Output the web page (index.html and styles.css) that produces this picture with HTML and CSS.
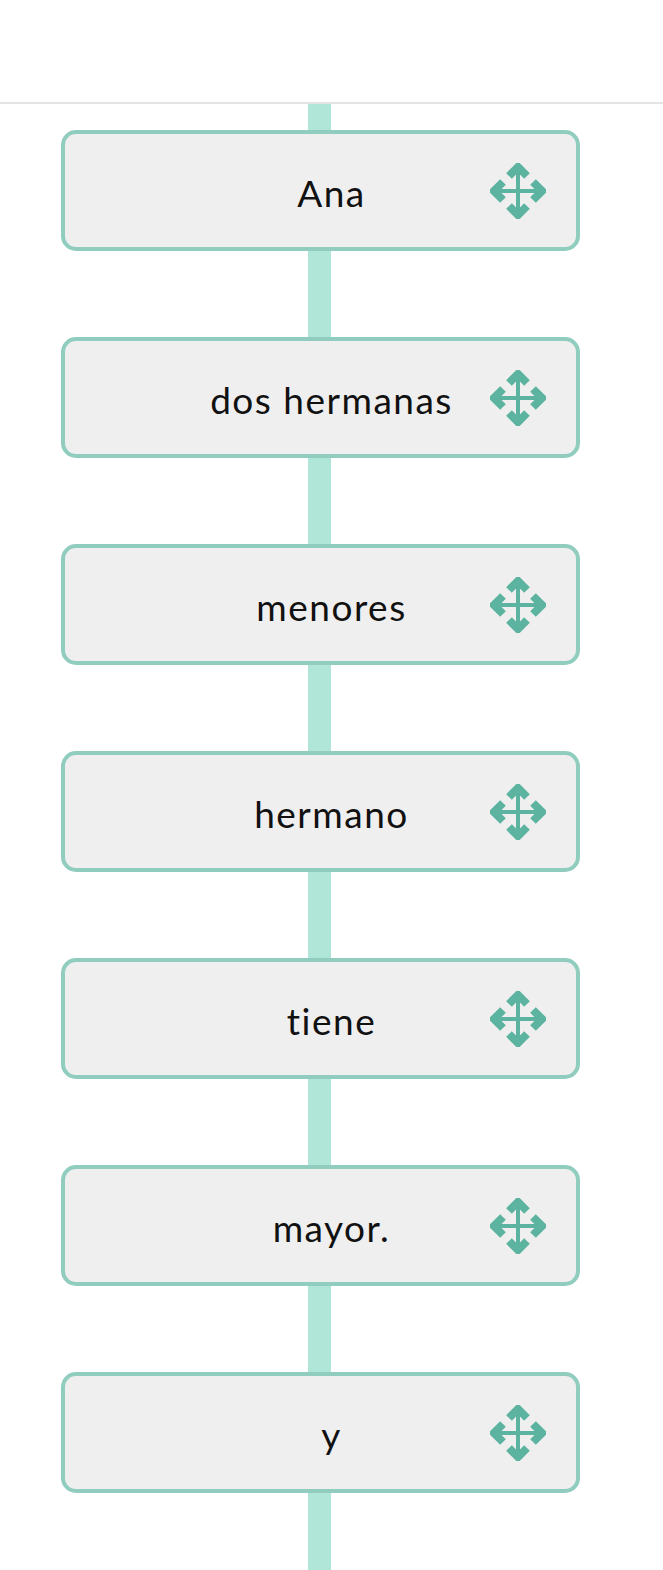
FILE: index.html
```html
<!DOCTYPE html>
<html lang="es">
<head>
<meta charset="utf-8">
<link rel="stylesheet" href="styles.css">
</head>
<body>
<div class="header"></div>
<div class="list">
  <div class="card"><span class="label">Ana</span><svg class="move" viewBox="0 0 56 56"><path d="M28 5V51M5 28H51" /><polyline class="head" points="19,13 28,4 37,13"/><polyline class="head" points="19,43 28,52 37,43"/><polyline class="head" points="13,19 4,28 13,37"/><polyline class="head" points="43,19 52,28 43,37"/></svg></div>
  <div class="card"><span class="label">dos hermanas</span><svg class="move" viewBox="0 0 56 56"><path d="M28 5V51M5 28H51" /><polyline class="head" points="19,13 28,4 37,13"/><polyline class="head" points="19,43 28,52 37,43"/><polyline class="head" points="13,19 4,28 13,37"/><polyline class="head" points="43,19 52,28 43,37"/></svg></div>
  <div class="card"><span class="label">menores</span><svg class="move" viewBox="0 0 56 56"><path d="M28 5V51M5 28H51" /><polyline class="head" points="19,13 28,4 37,13"/><polyline class="head" points="19,43 28,52 37,43"/><polyline class="head" points="13,19 4,28 13,37"/><polyline class="head" points="43,19 52,28 43,37"/></svg></div>
  <div class="card"><span class="label">hermano</span><svg class="move" viewBox="0 0 56 56"><path d="M28 5V51M5 28H51" /><polyline class="head" points="19,13 28,4 37,13"/><polyline class="head" points="19,43 28,52 37,43"/><polyline class="head" points="13,19 4,28 13,37"/><polyline class="head" points="43,19 52,28 43,37"/></svg></div>
  <div class="card"><span class="label">tiene</span><svg class="move" viewBox="0 0 56 56"><path d="M28 5V51M5 28H51" /><polyline class="head" points="19,13 28,4 37,13"/><polyline class="head" points="19,43 28,52 37,43"/><polyline class="head" points="13,19 4,28 13,37"/><polyline class="head" points="43,19 52,28 43,37"/></svg></div>
  <div class="card"><span class="label">mayor.</span><svg class="move" viewBox="0 0 56 56"><path d="M28 5V51M5 28H51" /><polyline class="head" points="19,13 28,4 37,13"/><polyline class="head" points="19,43 28,52 37,43"/><polyline class="head" points="13,19 4,28 13,37"/><polyline class="head" points="43,19 52,28 43,37"/></svg></div>
  <div class="card"><span class="label">y</span><svg class="move" viewBox="0 0 56 56"><path d="M28 5V51M5 28H51" /><polyline class="head" points="19,13 28,4 37,13"/><polyline class="head" points="19,43 28,52 37,43"/><polyline class="head" points="13,19 4,28 13,37"/><polyline class="head" points="43,19 52,28 43,37"/></svg></div>
</div>
</body>
</html>
```
FILE: styles.css
```css
html, body {
  margin: 0;
  padding: 0;
  background: #ffffff;
}
body {
  font-family: Lato, "Open Sans", sans-serif;
  overflow: hidden;
}
.header {
  height: 102px;
  border-bottom: 2px solid #e4e4e4;
}
.list {
  display: flex;
  flex-direction: column;
  gap: 86px;
  padding: 26px 0 90px 61px;
  background: linear-gradient(to right, transparent 308px, #b0e6d8 308px, #b0e6d8 331px, transparent 331px);
}
.card {
  box-sizing: border-box;
  width: 519px;
  height: 121px;
  border: 4px solid #91cdbf;
  border-radius: 15px;
  background: #efefef;
  display: flex;
  align-items: center;
  padding: 0 30px 0 22px;
}
.label {
  flex: 1;
  text-align: center;
  padding-left: 8px;
  font-size: 37px;
  letter-spacing: 1.5px;
  color: #111111;
  margin-top: 4px;
}
.move {
  width: 56px;
  height: 56px;
  margin-left: -78px;
  flex: none;
}
.move path {
  stroke: #5cb3a0;
  stroke-width: 4;
  fill: none;
}
.move .head {
  stroke: #5cb3a0;
  stroke-width: 8;
  fill: none;
  stroke-linejoin: miter;
  stroke-miterlimit: 4;
}
```
